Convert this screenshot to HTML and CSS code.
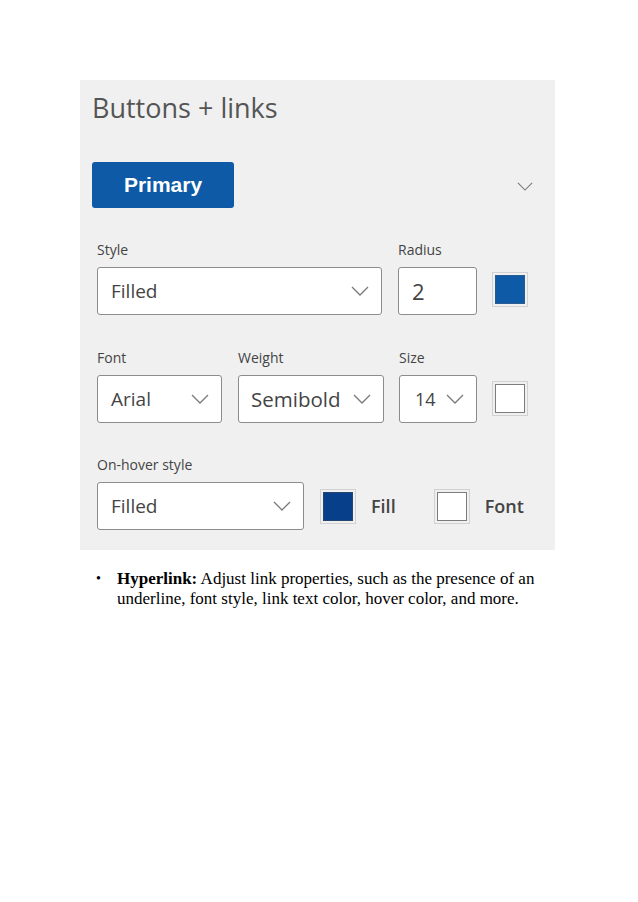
FILE: index.html
```html
<!DOCTYPE html>
<html lang="en">
<head>
    <meta charset="UTF-8">
    <meta name="viewport" content="width=device-width, initial-scale=1.0">
    <title>Buttons + links</title>
    <link rel="stylesheet" href="styles.css">
</head>
<body>
    <div class="pagina">
        <div class="panel">
            <h1 class="titulo">Buttons + links</h1>
            <div class="fila-boton">
                <button class="primario">Primary</button>
                <svg class="chev chev-grande" viewBox="0 0 18 10"><polyline points="1,1 9,9 17,1"/></svg>
            </div>

            <div class="fila fila-1">
                <div class="campo ancho-style">
                    <label>Style</label>
                    <div class="caja">
                        <span>Filled</span>
                        <svg class="chev" viewBox="0 0 18 10"><polyline points="1,1 9,9 17,1"/></svg>
                    </div>
                </div>
                <div class="campo ancho-radius">
                    <label>Radius</label>
                    <div class="caja"><span class="num">2</span></div>
                </div>
                <div class="muestra"><div class="relleno azul"></div></div>
            </div>

            <div class="fila fila-2">
                <div class="campo ancho-font">
                    <label>Font</label>
                    <div class="caja">
                        <span>Arial</span>
                        <svg class="chev" viewBox="0 0 18 10"><polyline points="1,1 9,9 17,1"/></svg>
                    </div>
                </div>
                <div class="campo ancho-weight">
                    <label>Weight</label>
                    <div class="caja">
                        <span class="grande">Semibold</span>
                        <svg class="chev" viewBox="0 0 18 10"><polyline points="1,1 9,9 17,1"/></svg>
                    </div>
                </div>
                <div class="campo ancho-size">
                    <label>Size</label>
                    <div class="caja">
                        <span class="chico">14</span>
                        <svg class="chev" viewBox="0 0 18 10"><polyline points="1,1 9,9 17,1"/></svg>
                    </div>
                </div>
                <div class="muestra"><div class="relleno blanco"></div></div>
            </div>

            <div class="fila fila-3">
                <div class="campo ancho-hover">
                    <label>On-hover style</label>
                    <div class="caja">
                        <span>Filled</span>
                        <svg class="chev" viewBox="0 0 18 10"><polyline points="1,1 9,9 17,1"/></svg>
                    </div>
                </div>
                <div class="muestra"><div class="relleno marino"></div></div>
                <span class="etiqueta-color">Fill</span>
                <div class="muestra muestra-font"><div class="relleno blanco"></div></div>
                <span class="etiqueta-color ultima">Font</span>
            </div>
        </div>

        <div class="lista">
            <span class="punto">•</span>
            <p><b>Hyperlink:</b> Adjust link properties, such as the presence of an underline, font style, link text color, hover color, and more.</p>
        </div>
    </div>
</body>
</html>
```

FILE: styles.css
```css
body {
    margin: 0;
    background: #fff;
    font-family: 'Open Sans', 'Noto Sans', sans-serif;
}
.pagina {
    padding: 80px 0 0 80px;
}
.panel {
    width: 475px;
    height: 470px;
    box-sizing: border-box;
    background: #f0f0f0;
    padding: 10px 22px 0 12px;
}
.titulo {
    margin: 0;
    font-size: 27px;
    line-height: 36px;
    font-weight: 400;
    color: #555;
}
.fila-boton {
    margin-top: 36px;
    display: flex;
    align-items: center;
    justify-content: space-between;
}
.primario {
    width: 142px;
    height: 46px;
    border: none;
    border-radius: 3px;
    background: #0e5aa6;
    color: #fff;
    font-family: 'Liberation Sans', Arial, sans-serif;
    font-weight: bold;
    font-size: 21px;
    padding: 0;
}
.chev {
    width: 18px;
    height: 10px;
    fill: none;
    stroke: #7a7a7a;
    stroke-width: 1.3;
    flex-shrink: 0;
}
.chev-grande {
    width: 16px;
    height: 9px;
    margin-top: 2px;
}
.fila {
    display: flex;
    align-items: flex-end;
    margin-left: 5px;
}
.fila-1 {
    margin-top: 32px;
}
.fila-2 {
    margin-top: 33px;
}
.fila-3 {
    margin-top: 32px;
    align-items: center;
}
.fila-3 .campo {
    align-self: flex-end;
}
.campo {
    display: flex;
    flex-direction: column;
    margin-right: 16px;
}
.campo label {
    font-size: 14px;
    line-height: 19px;
    color: #444;
    margin-bottom: 8px;
}
.caja {
    height: 48px;
    box-sizing: border-box;
    background: #fff;
    border: 1.5px solid #8c8c8c;
    border-radius: 3px;
    display: flex;
    align-items: center;
    justify-content: space-between;
    padding: 0 12px 0 13px;
    color: #444;
    font-size: 19px;
}
.caja .num {
    font-size: 22px;
}
.caja .grande {
    font-size: 20.5px;
}
.caja .chico {
    font-size: 18px;
    padding-left: 2px;
}
.ancho-style { width: 285px; }
.ancho-radius { width: 79px; margin-right: 15px; }
.ancho-font { width: 125px; }
.ancho-weight { width: 146px; margin-right: 15px; }
.ancho-size { width: 78px; margin-right: 15px; }
.ancho-hover { width: 207px; }
.ancho-weight .caja {
    padding-left: 12px;
}
.fila-1 .muestra {
    margin-bottom: 8px;
}
.fila-2 .muestra {
    margin-bottom: 7px;
}
.fila-3 .muestra {
    margin-top: 27px;
}
.muestra {
    width: 36px;
    height: 35px;
    box-sizing: border-box;
    border: 1px solid #d2d2d2;
    padding: 2px;
}
.relleno {
    width: 100%;
    height: 100%;
    box-sizing: border-box;
}
.azul {
    background: #0e5aa6;
    border: 1px solid #2a5d8f;
}
.marino {
    background: #083f8a;
    border: 1px solid #25476f;
}
.blanco {
    background: #fff;
    border: 1px solid #7c7c7c;
}
.etiqueta-color {
    margin-top: 27px;
    margin-left: 15px;
    font-size: 18px;
    font-weight: 600;
    color: #444;
}
.muestra-font {
    margin-left: 38px;
}
.etiqueta-color.ultima {
    margin-left: 15px;
}
.lista {
    display: flex;
    margin-top: 19px;
    font-family: 'Liberation Serif', 'Times New Roman', serif;
    font-size: 17px;
    line-height: 20px;
    color: #000;
    padding-left: 16px;
}
.punto {
    width: 21px;
    flex-shrink: 0;
    font-size: 14px;
}
.lista p {
    margin: 0;
    width: 430px;
}
```
